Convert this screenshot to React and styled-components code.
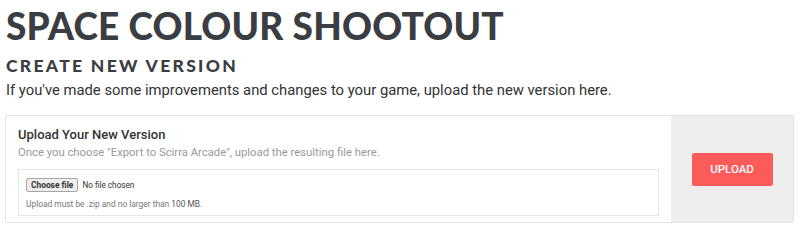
import React from 'react';
import styled, { createGlobalStyle } from 'styled-components';

const GlobalStyle = createGlobalStyle`
  body {
    margin: 0;
    background: #fff;
    font-family: Roboto, "Liberation Sans", sans-serif;
    color: #333;
  }
`;

const Page = styled.div`
  padding: 0 6px 0 5px;
`;

const Title = styled.h1`
  margin: 0;
  padding: 4px 0 0 1px;
  font-family: Lato, "DejaVu Sans", sans-serif;
  font-weight: 900;
  font-size: 37px;
  line-height: 44px;
  letter-spacing: 0.2px;
  color: #3a3d41;
`;

const SubTitle = styled.h2`
  margin: 8px 0 0 1px;
  font-family: Lato, "DejaVu Sans", sans-serif;
  font-weight: 900;
  font-size: 17.5px;
  line-height: 20px;
  letter-spacing: 2.3px;
  color: #3a3d41;
`;

const Intro = styled.p`
  margin: 3px 0 0 1px;
  font-size: 14.8px;
  line-height: 22px;
  color: #333;
`;

const Card = styled.section`
  margin-top: 14px;
  display: flex;
  border: 1px solid #e3e3e3;
  border-radius: 2px;
  height: 106px;
`;

const CardBody = styled.div`
  flex: 1;
  padding: 10px 12px 0 12px;
`;

const CardTitle = styled.h3`
  margin: 0;
  font-size: 13px;
  font-weight: 500;
  line-height: 18px;
  color: #333;
`;

const CardHint = styled.p`
  margin: 0;
  font-size: 11.3px;
  line-height: 17px;
  color: #999;
`;

const FileBox = styled.div`
  margin-top: 8px;
  border: 1px solid #e5e5e5;
  padding: 8px 7px 6px;
`;

const FileRow = styled.label`
  display: flex;
  align-items: center;
  gap: 4px;
  font-size: 8.2px;
  color: #333;
  input {
    display: none;
  }
`;

const ChooseButton = styled.span`
  display: inline-block;
  padding: 1px 4px;
  line-height: 10px;
  border: 1px solid #a6a6a6;
  border-radius: 2px;
  background: #efefef;
  font-size: 8.4px;
  font-weight: 700;
  color: #333;
`;

const FileNote = styled.div`
  margin-top: 7px;
  font-size: 8.4px;
  color: #777;
  strong {
    font-weight: 400;
    color: #555;
  }
`;

const Side = styled.div`
  width: 122px;
  background: #eeeeee;
  display: flex;
  align-items: center;
  justify-content: center;
`;

const UploadButton = styled.button`
  width: 81px;
  height: 33px;
  border: none;
  border-radius: 2px;
  background: #fd5a5a;
  color: #fff;
  font-family: Roboto, "Liberation Sans", sans-serif;
  font-weight: 500;
  font-size: 11.5px;
  cursor: pointer;
`;

export default function App() {
  return (
    <>
      <GlobalStyle />
      <Page>
        <Title>SPACE COLOUR SHOOTOUT</Title>
        <SubTitle>CREATE NEW VERSION</SubTitle>
        <Intro>If you've made some improvements and changes to your game, upload the new version here.</Intro>
        <Card>
          <CardBody>
            <CardTitle>Upload Your New Version</CardTitle>
            <CardHint>Once you choose "Export to Scirra Arcade", upload the resulting file here.</CardHint>
            <FileBox>
              <FileRow>
                <input type="file" />
                <ChooseButton>Choose file</ChooseButton>
                <span>No file chosen</span>
              </FileRow>
              <FileNote>
                Upload must be .zip and no larger than <strong>100 MB</strong>.
              </FileNote>
            </FileBox>
          </CardBody>
          <Side>
            <UploadButton>UPLOAD</UploadButton>
          </Side>
        </Card>
      </Page>
    </>
  );
}
